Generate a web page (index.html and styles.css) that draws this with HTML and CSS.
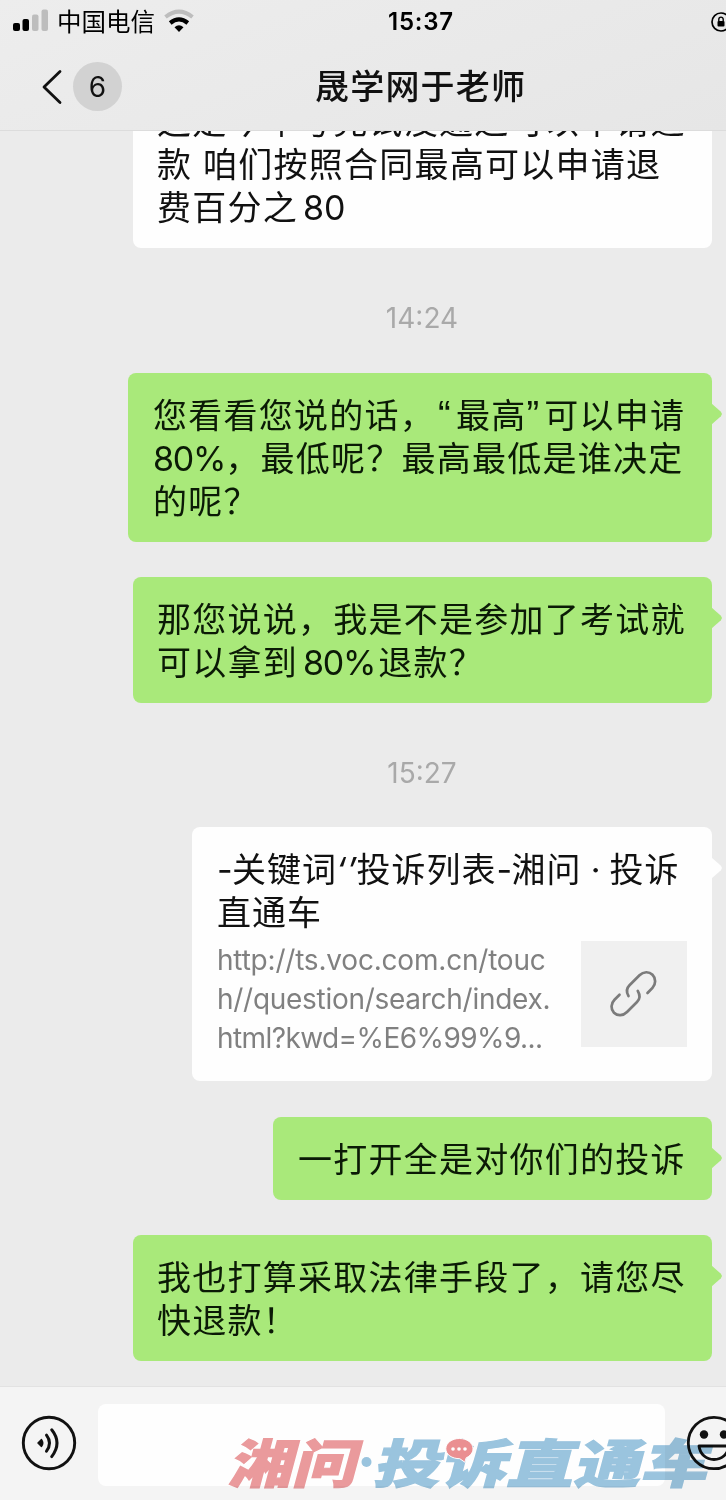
FILE: index.html
```html
<!DOCTYPE html>
<html lang="zh-CN">
<head>
<meta charset="utf-8">
<title>晟学网于老师</title>
<link rel="stylesheet" href="styles.css">
</head>
<body>
<div class="screen">
  <header class="header">
    <div class="status">
      <svg class="signal" width="36" height="24" viewBox="0 0 36 24">
        <rect x="0" y="14" width="7" height="8" rx="2" fill="#000"/>
        <rect x="9.5" y="10" width="6.5" height="12" rx="2" fill="#000"/>
        <rect x="19" y="5.5" width="6.5" height="16.5" rx="2" fill="#bdbdbd"/>
        <rect x="28.5" y="0.5" width="6.5" height="21.500" rx="2" fill="#bdbdbd"/>
      </svg>
      <span class="carrier">中国电信</span>
      <svg class="wifi" width="32" height="24" viewBox="0 0 32 24" fill="none">
        <path d="M2.500 8Q16-2.800 29.500 8" stroke="#bdbdbd" stroke-width="4"/>
        <path d="M7.200 14Q16 6.800 24.800 14" stroke="#000" stroke-width="4.200"/>
        <path d="M11.500 18.200Q16 14.500 20.500 18.200L16 23Z" fill="#000"/>
      </svg>
      <span class="clock">15:37</span>
      <svg class="lock" width="20" height="20" viewBox="0 0 20 20" fill="none" stroke="#000">
        <circle cx="10" cy="10" r="9" stroke-width="1.700"/>
        <rect x="6.500" y="9" width="7" height="5.500" rx="1" fill="#000" stroke="none"/>
        <path d="M7.800 9V7.300a2.200 2.200 0 0 1 4.400 0V9" stroke-width="1.400"/>
      </svg>
    </div>
    <div class="nav">
      <svg class="back" width="22" height="36" viewBox="0 0 22 36" fill="none"><path d="M19 2.500L3 18L19 33.500" stroke="#111" stroke-width="2.800" stroke-linecap="round" stroke-linejoin="round"/></svg>
      <span class="unread">6</span>
      <h1 class="title">晟学网于老师</h1>
    </div>
  </header>

  <main class="chat">
    <div class="bubble bubble-quote">这是今年考完试没通过可以申请退<br>款 咱们按照合同最高可以申请退<br>费百分之<span class="num">80</span></div>
    <time class="stamp">14:24</time>
    <div class="bubble bubble-green bubble-wide tail">您看看您说的话，<span class="quote quote-open">“</span>最高<span class="quote quote-close">”</span>可以申请<br><span class="percent">80%</span>，最低呢？最高最低是谁决定<br>的呢？</div>
    <div class="bubble bubble-green bubble-next tail">那您说说，我是不是参加了考试就<br>可以拿到<span class="percent percent-inner">80%</span>退款？</div>
    <time class="stamp stamp-late">15:27</time>
    <div class="card tail">
      <div class="card-title"><span class="hyphen">-</span>关键词<i class="ticks">‘’</i>投诉列表<span class="hyphen">-</span>湘问<span class="dot"> · </span>投诉<br>直通车</div>
      <div class="card-body">
        <div class="card-url"><span class="url-a">http://ts.voc.com.cn/touc</span><br><span class="url-b">h//question/search/index.</span><br><span class="url-c">html?kwd=%E6%99%9...</span></div>
        <div class="thumb">
          <svg width="48" height="48" viewBox="0 0 48 48" fill="none" stroke="#7b7b7b" stroke-width="2.700" stroke-linecap="round">
            <path d="M18.500 26C16.200 22.200 16.500 18.300 19.500 15.300L29.500 5.300C33.500 1.300 39 1.300 42.500 4.800C46 8.300 46 14 42.500 17.800L37.500 23"/>
            <path d="M27.800 21C30.200 25 30 29 27 32L17 42C13 46 7.500 46.200 4 42.700C.5 39 .8 33.500 4.500 29.700L9.500 24.700"/>
          </svg>
        </div>
      </div>
    </div>
    <div class="bubble bubble-green bubble-short bubble-next tail">一打开全是对你们的投诉</div>
    <div class="bubble bubble-green bubble-next tail">我也打算采取法律手段了，请您尽<br>快退款！</div>
  </main>

  <footer class="composer">
    <svg class="voice" width="56" height="56" viewBox="0 0 56 56" fill="none" stroke="#111">
      <circle cx="28" cy="28" r="25.700" stroke-width="2.900"/>
      <path d="M17 28L20.500 24.600Q23 28 20.500 31.400Z" fill="#111" stroke-width="1.500" stroke-linejoin="round"/>
      <path d="M25.500 20.200Q31.500 28 25.500 36.200M30.700 14.800Q41.300 28 30.700 41.600" stroke-width="3" stroke-linecap="round"/>
    </svg>
    <div class="field"></div>
    <svg class="emoji" width="56" height="56" viewBox="0 0 56 56" fill="none" stroke="#111" stroke-width="2.800">
      <circle cx="28" cy="28" r="25.700"/>
      <circle cx="18" cy="19.500" r="4.200" fill="#111" stroke="none"/>
      <circle cx="38" cy="19.500" r="4.200" fill="#111" stroke="none"/>
      <path d="M13 31H43C42 39 36 44.500 28 44.500S14 39 13 31Z" stroke-linejoin="round"/>
    </svg>
    <svg class="watermark" width="506" height="70" viewBox="0 0 506 70">
      <g class="mark-text" transform="skewX(-15)">
        <text class="mark-red" x="22" y="54" textLength="128" lengthAdjust="spacingAndGlyphs">湘问</text>
        <text class="mark-blue" x="167" y="54" textLength="334" lengthAdjust="spacingAndGlyphs">投诉直通车</text>
      </g>
      <circle cx="146.500" cy="33" r="5" fill="#9bc5df"/>
      <path d="M239.500 9.500c7.500 0 13.500 4.300 13.500 10.300 0 4-3 7.300-6.800 9l-1.400 4.400-5-3.500c-7.800 0-14-4-14-9.900s6.200-10.300 13.700-10.300Z" fill="#eb9092" stroke="#fff" stroke-width="1"/>
      <g fill="#fff"><circle cx="233" cy="20" r="1.800"/><circle cx="239" cy="20" r="1.800"/><circle cx="245" cy="20" r="1.800"/></g>
    </svg>
  </footer>
</div>
</body>
</html>
```

FILE: styles.css
```css
* { box-sizing: border-box; }

body {
  margin: 0;
  overflow: hidden;
  font-family: Inter, "Noto Sans CJK SC", sans-serif;
  color: #111;
}

.screen {
  display: flex;
  flex-direction: column;
  width: 726px;
  height: 1500px;
  overflow: hidden;
  background: #ebebeb;
}

.header {
  flex: none;
  height: 131px;
  border-bottom: 1px solid #dcdcdc;
  background: linear-gradient(160deg, #ededed, #e6e6e6);
}

.status {
  display: flex;
  align-items: center;
  height: 43px;
  padding-left: 13px;
  color: #000;
}

.status svg { flex: none; }

.signal { margin-top: -2px; }

.carrier {
  width: 100px;
  margin-left: 8px;
  font-size: 24.500px;
  line-height: 36px;
  white-space: nowrap;
}

.wifi {
  margin-top: -2px;
  margin-left: 8px;
}

.clock {
  width: 70px;
  margin-left: 192px;
  padding-left: 1px;
  font-size: 24px;
  font-weight: 600;
  letter-spacing: 0.800px;
  white-space: nowrap;
}

.lock { margin-left: 257px; }

.nav {
  display: flex;
  align-items: center;
  height: 87px;
  padding-left: 41px;
}

.unread {
  width: 49px;
  height: 49px;
  margin-left: 10px;
  border-radius: 50%;
  background: #d2d2d2;
  font-size: 28px;
  line-height: 50px;
  text-align: center;
}

.title {
  margin: 0 0 0 193px;
  font-size: 34px;
  font-weight: 500;
  line-height: 50px;
  letter-spacing: 1.200px;
  white-space: nowrap;
}

.chat {
  display: flex;
  flex: 1;
  flex-direction: column;
  align-items: flex-end;
  overflow: hidden;
  padding-right: 14px;
}

.bubble {
  position: relative;
  flex: none;
  width: 579px;
  padding: 21px 0 19px 24px;
  border-radius: 8px;
  font-size: 34px;
  line-height: 43px;
  letter-spacing: 1.250px;
  white-space: nowrap;
}

.bubble-quote {
  margin-top: -52px;
  background: #fefefe;
}

.bubble-green { background: #a9e97a; color: #0b1a06; }
.bubble-wide { width: 584px; padding-left: 25px; }
.bubble-short { width: 439px; padding-left: 25px; }
.bubble-next { margin-top: 35px; }
.card + .bubble-next { margin-top: 36px; }

.num {
  margin-left: 5px;
  letter-spacing: 0;
}

.percent { letter-spacing: -1.200px; }

.percent-inner {
  margin-right: 3px;
  margin-left: 5px;
}

.quote {
  font-family: "Liberation Sans", sans-serif;
  font-size: 38px;
  line-height: 0;
}

.quote-open {
  margin-right: 4px;
  margin-left: 3px;
}

.quote-close { margin-right: 4px; }

.tail::after {
  content: "";
  position: absolute;
  top: 30px;
  right: -10px;
  width: 11px;
  height: 22px;
  background: inherit;
  clip-path: polygon(0 0, 90% 40%, 100% 50%, 90% 60%, 0 100%);
}

.stamp {
  align-self: flex-start;
  flex: none;
  width: 844px;
  margin: 50px 0 35px;
  font-size: 28px;
  line-height: 40px;
  text-align: center;
  color: #a9a9a9;
}

.stamp-late { margin: 50px 0 34px; }

.card {
  position: relative;
  flex: none;
  width: 520px;
  height: 254px;
  padding: 21px 25px 0;
  border-radius: 8px;
  background: #fefefe;
}

.card-title {
  font-size: 34px;
  line-height: 43px;
  letter-spacing: 1px;
  white-space: nowrap;
}

.hyphen { letter-spacing: -0.600px; }

.ticks {
  margin-right: -1px;
  margin-left: -1px;
  letter-spacing: 0.500px;
}

.dot { letter-spacing: -0.300px; }

.card-body {
  display: flex;
  justify-content: space-between;
  padding-top: 7px;
}

.card-url {
  font-size: 28px;
  line-height: 39px;
  white-space: nowrap;
  color: #808080;
}

.url-a { letter-spacing: -0.200px; }
.url-b { letter-spacing: -0.280px; }
.url-c { letter-spacing: -0.580px; }

.thumb {
  display: flex;
  align-items: center;
  justify-content: center;
  width: 106px;
  height: 106px;
  background: #f0f0f0;
}

.composer {
  position: relative;
  display: flex;
  flex: none;
  align-items: center;
  height: 114px;
  padding-bottom: 2px;
  padding-left: 21px;
  border-top: 1px solid #e2e2e2;
  background: #f4f4f4;
}

.composer > svg { flex: none; }

.field {
  flex: none;
  width: 567px;
  height: 82px;
  margin: 4px 21px 0;
  border-radius: 8px;
  background: #fefefe;
}

.watermark {
  position: absolute;
  top: 42px;
  left: 220px;
  mix-blend-mode: multiply;
}

.mark-text {
  font-family: "Noto Sans CJK SC", sans-serif;
  font-size: 52px;
  font-weight: 900;
  stroke-width: 1.200px;
}

.mark-red { fill: #eb9b9d; stroke: #eb9b9d; }
.mark-blue { fill: #9bc5df; stroke: #9bc5df; }
```
